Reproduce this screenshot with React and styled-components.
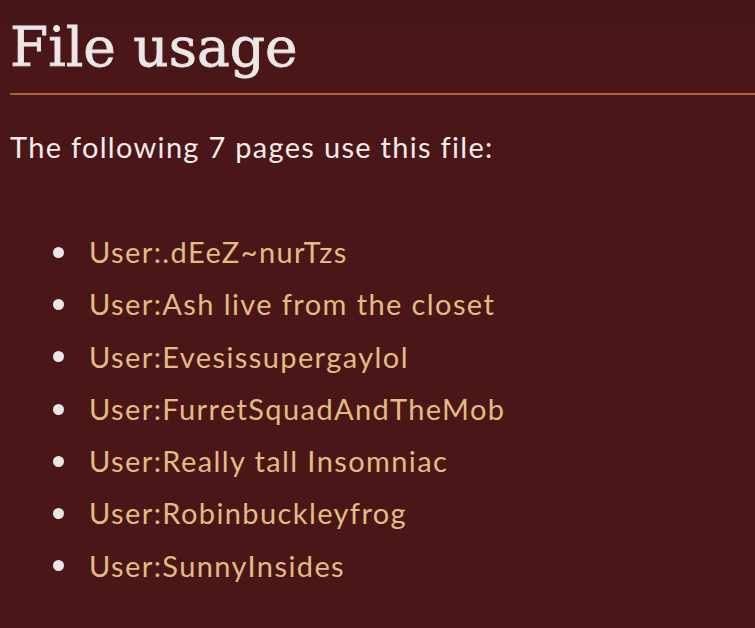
import styled, { createGlobalStyle } from 'styled-components';

const GlobalStyle = createGlobalStyle`
  html, body {
    margin: 0;
    padding: 0;
    background: #4a1618;
  }
`;

const pages = [
  'User:.dEeZ~nurTzs',
  'User:Ash live from the closet',
  'User:Evesissupergaylol',
  'User:FurretSquadAndTheMob',
  'User:Really tall Insomniac',
  'User:Robinbuckleyfrog',
  'User:SunnyInsides',
];

const App = () => {
  return (
    <Page>
      <GlobalStyle />
      <Heading>File usage</Heading>
      <Intro>The following 7 pages use this file:</Intro>
      <PageList>
        {pages.map((name) => (
          <Item key={name}>
            <a href="#">{name}</a>
          </Item>
        ))}
      </PageList>
    </Page>
  );
};
export default App;

const Page = styled.div`
  min-height: 628px;
  padding-left: 10px;
  background: linear-gradient(#43161a 0px, #4a1618 40px);
  overflow: hidden;
`;

const Heading = styled.h2`
  margin: 0;
  padding-top: 14px;
  padding-bottom: 13px;
  font-family: 'DejaVu Serif', serif;
  font-weight: 400;
  font-size: 55px;
  line-height: 66px;
  color: #ebe7e6;
  -webkit-text-stroke: 0.8px #ebe7e6;
  border-bottom: 2px solid #a8672b;
`;

const Intro = styled.p`
  margin: 34px 0 0;
  font-family: Lato, sans-serif;
  font-size: 29px;
  line-height: 36px;
  letter-spacing: 1.3px;
  color: #f2ecea;
`;

const PageList = styled.ul`
  list-style: none;
  margin: 61px 0 0;
  padding-left: 43px;
  font-family: Lato, sans-serif;
  font-size: 29px;
  line-height: 52.3px;
  letter-spacing: 1.4px;
  a {
    color: #e2bc82;
    text-decoration: none;
  }
`;

const Item = styled.li`
  display: flex;
  align-items: center;
  &::before {
    content: '';
    flex: none;
    width: 11px;
    height: 11px;
    margin-right: 25px;
    border-radius: 50%;
    background: #ebe7e6;
  }
`;
